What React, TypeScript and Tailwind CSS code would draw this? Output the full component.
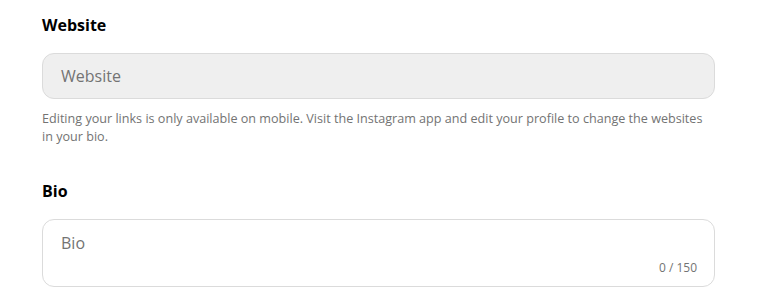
import React from 'react';

const App: React.FC = () => {
  return (
    <div className="min-h-screen bg-white font-['Open_Sans',sans-serif] text-[#000]">
      <div className="w-[673px] ml-[42px] pt-[14px]">
        {/* Website */}
        <h2 className="text-[16px] font-bold leading-[22px]">Website</h2>
        <div className="mt-[17px] h-[46px] rounded-[12px] border border-[#dbdbdb] bg-[#efefef] flex items-center px-[18px]">
          <span className="text-[16px] text-[#737373]">Website</span>
        </div>
        <p className="mt-[11px] text-[12.6px] leading-[18px] text-[#737373]">
          Editing your links is only available on mobile. Visit the Instagram app and edit your profile to change the websites in your bio.
        </p>

        {/* Bio */}
        <h2 className="mt-[34px] text-[16px] font-bold leading-[22px]">Bio</h2>
        <div className="mt-[17px] h-[68px] rounded-[12px] border border-[#dbdbdb] bg-white relative px-[18px] pt-[11px]">
          <span className="text-[16px] text-[#737373]">Bio</span>
          <span className="absolute right-[17px] bottom-[9px] text-[12px] text-[#737373]">0 / 150</span>
        </div>
      </div>
    </div>
  );
};

export default App;
